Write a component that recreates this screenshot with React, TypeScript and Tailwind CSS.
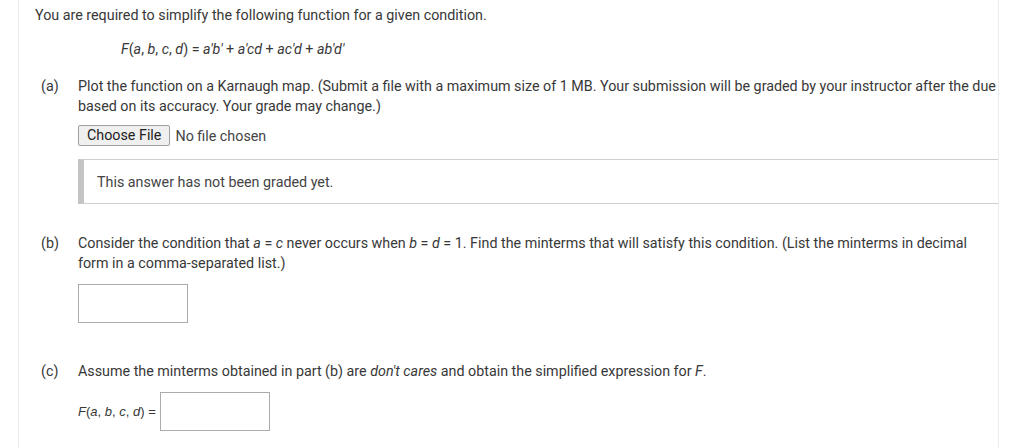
import React from 'react';

function Part({ label, children }: { label: string; children: React.ReactNode }) {
    return (
        <div className="flex">
            <div className="w-[43px] shrink-0 pl-[6px]">{label}</div>
            <div className="flex-1 min-w-0">{children}</div>
        </div>
    );
}

export default function App() {
    return (
        <div className="bg-white w-[1015px] h-[448px] overflow-hidden pl-[18px] text-[14.3px] leading-[20px] text-[#383838] font-['Roboto','Liberation_Sans',sans-serif]">
            <div className="w-[981px] h-full border-l border-r border-[#ececec] pl-4 pt-[5px]">
                <p>You are required to simplify the following function for a given condition.</p>

                {/* function */}
                <p className="mt-[14px] ml-[86px]">
                    <i>F</i>(<i>a</i>, <i>b</i>, <i>c</i>, <i>d</i>) = <i>a′b′</i> + <i>a′cd</i> + <i>ac′d</i> + <i>ab′d′</i>
                </p>

                <div className="mt-[17px]">
                    <Part label="(a)">
                        <p className="whitespace-nowrap">
                            Plot the function on a Karnaugh map. (Submit a file with a maximum size of 1 MB. Your submission will be graded by your instructor after the due
                            <br />
                            based on its accuracy. Your grade may change.)
                        </p>
                        <div className="mt-[9px] flex items-center gap-[5px]">
                            <button className="h-[21px] px-[8px] bg-[#efefef] border border-[#a0a0a0] rounded-[2px] text-[14.3px] leading-[19px] text-[#222]">
                                Choose File
                            </button>
                            <span className="text-[#444]">No file chosen</span>
                        </div>
                        <div className="mt-[13px] h-[45px] flex items-center border-t border-b border-[#cfcfcf] border-l-[6px] border-l-[#c4c4c4] pl-[13px] text-[#444]">
                            This answer has not been graded yet.
                        </div>
                    </Part>
                </div>

                <div className="mt-[29px]">
                    <Part label="(b)">
                        <p className="whitespace-nowrap">
                            Consider the condition that <i>a</i> = <i>c</i> never occurs when <i>b</i> = <i>d</i> = 1. Find the minterms that will satisfy this condition. (List the minterms in decimal
                            <br />
                            form in a comma-separated list.)
                        </p>
                        <div className="mt-[11px] w-[110px] h-[39px] border border-[#ababab]" />
                    </Part>
                </div>

                <div className="mt-[38px]">
                    <Part label="(c)">
                        <p>
                            Assume the minterms obtained in part (b) are <i>don't cares</i> and obtain the simplified expression for <i>F</i>.
                        </p>
                        <div className="mt-[11px] flex items-center gap-[4px]">
                            <span className="text-[13px] font-['Liberation_Sans','Arial',sans-serif]">
                                <i>F</i>(<i>a</i>, <i>b</i>, <i>c</i>, <i>d</i>) =
                            </span>
                            <div className="w-[110px] h-[39px] border border-[#ababab]" />
                        </div>
                    </Part>
                </div>
            </div>
        </div>
    );
}
